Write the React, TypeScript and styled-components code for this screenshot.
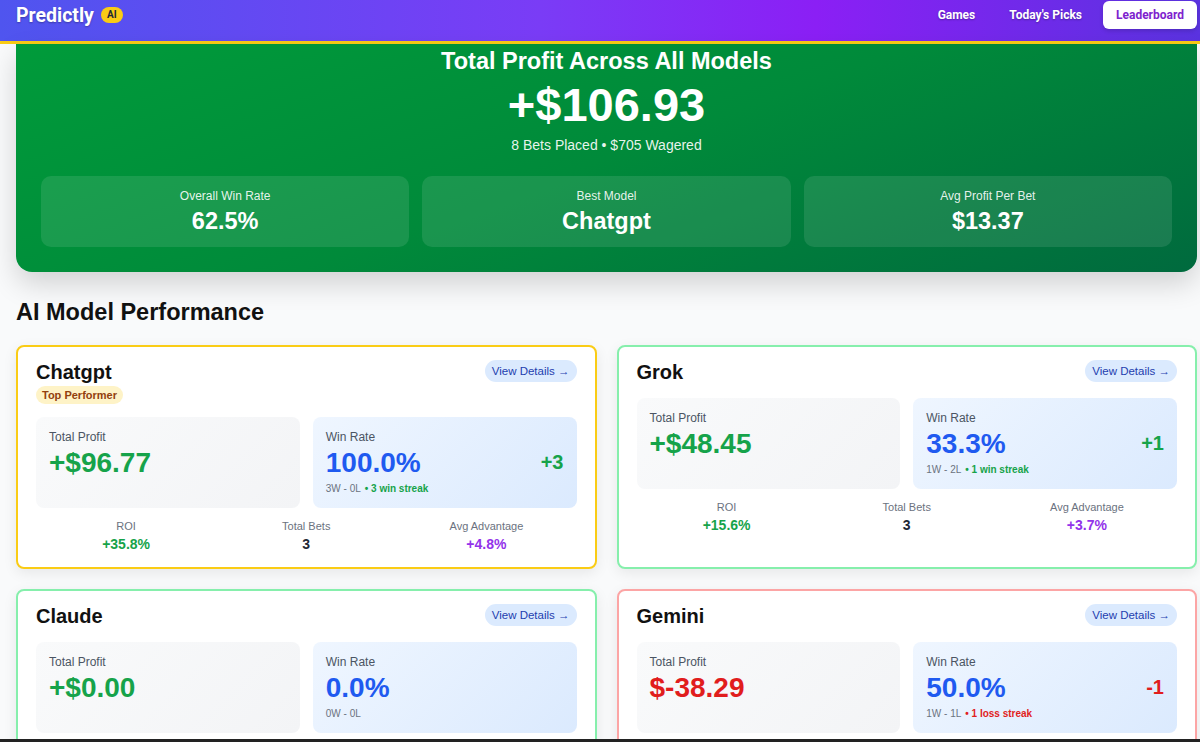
import React from 'react'
import styled, { createGlobalStyle } from 'styled-components'

const GlobalStyle = createGlobalStyle`
  html, body {
    margin: 0;
    padding: 0;
    overflow: hidden;
    background: #f9fafb;
    font-family: 'Liberation Sans', Arial, sans-serif;
    color: #111827;
  }
  * { box-sizing: border-box; }
`

const Page = styled.div`
  min-height: 742px;
`

const Header = styled.header`
  height: 44px;
  display: flex;
  justify-content: space-between;
  align-items: flex-start;
  padding: 1px 3px 0 16px;
  background: linear-gradient(90deg, #4f55ef 0%, #7a3cf6 45%, #8b1ff5 68%, #5a33e0 100%);
  border-bottom: 3px solid #facc15;
  font-family: Roboto, 'Liberation Sans', sans-serif;
`

const Brand = styled.div`
  display: flex;
  align-items: center;
  gap: 7px;
  height: 28px;
`

const Logo = styled.span`
  color: #fff;
  font-size: 19.5px;
  font-weight: 700;
  text-shadow: 0 1px 2px rgba(0, 0, 0, 0.3);
`

const AiBadge = styled.span`
  background: #facc15;
  color: #1f2937;
  font-size: 10px;
  font-weight: 700;
  padding: 2px 6px;
  border-radius: 8px;
  line-height: 12px;
`

const Nav = styled.nav`
  display: flex;
  gap: 8px;
`

const NavItem = styled.a<{ $active?: boolean }>`
  display: flex;
  align-items: center;
  height: 28px;
  padding: 0 13px;
  border-radius: 6px;
  font-size: 12px;
  font-weight: 700;
  color: ${({ $active }) => ($active ? '#7e22ce' : '#fff')};
  background: ${({ $active }) => ($active ? '#fff' : 'transparent')};
  box-shadow: ${({ $active }) => ($active ? '0 2px 4px rgba(0,0,0,0.15)' : 'none')};
  text-shadow: ${({ $active }) => ($active ? 'none' : '0 1px 2px rgba(0,0,0,0.3)')};
  text-decoration: none;
  cursor: pointer;
`

const Main = styled.main`
  padding: 0 3px 0 16px;
`

const Hero = styled.section`
  background: linear-gradient(160deg, #009b3a 0%, #008a3a 50%, #006a3e 100%);
  border-radius: 0 0 16px 16px;
  padding: 3px 25px 25px;
  color: #fff;
  text-align: center;
  box-shadow: 0 12px 28px rgba(0, 0, 0, 0.16);
`

const HeroTitle = styled.h1`
  margin: 0;
  font-size: 23.5px;
  line-height: 28px;
  font-weight: 700;
`

const HeroValue = styled.div`
  margin-top: 3px;
  font-size: 47px;
  line-height: 54px;
  font-weight: 700;
`

const HeroSub = styled.div`
  margin-top: 3px;
  font-size: 14px;
  line-height: 20px;
  color: rgba(255, 255, 255, 0.92);
`

const HeroStats = styled.div`
  margin-top: 21px;
  display: grid;
  grid-template-columns: repeat(3, 1fr);
  gap: 13px;
`

const HeroStat = styled.div`
  background: rgba(255, 255, 255, 0.1);
  border-radius: 10px;
  padding: 12px;
`

const HeroStatLabel = styled.div`
  font-size: 12px;
  line-height: 16px;
  color: rgba(255, 255, 255, 0.9);
`

const HeroStatValue = styled.div`
  margin-top: 3px;
  font-size: 23.5px;
  line-height: 28px;
  font-weight: 700;
`

const SectionTitle = styled.h2`
  margin: 26px 0 19px;
  font-size: 23.5px;
  line-height: 28px;
  font-weight: 700;
  color: #111;
`

const Grid = styled.div`
  display: grid;
  grid-template-columns: 1fr 1fr;
  gap: 20px;
`

const Card = styled.div<{ $border: string }>`
  background: #fff;
  border: 2px solid ${({ $border }) => $border};
  border-radius: 8px;
  padding: 13px 18px 14px;
  box-shadow: 0 4px 14px rgba(0, 0, 0, 0.08);
`

const CardHead = styled.div`
  display: flex;
  justify-content: space-between;
  align-items: flex-start;
  margin-bottom: 13px;
`

const CardTitle = styled.h3`
  margin: 0;
  font-size: 20px;
  line-height: 25px;
  font-weight: 700;
  color: #111;
`

const TopBadge = styled.span`
  display: inline-block;
  background: #fef3c7;
  color: #92400e;
  font-size: 11px;
  font-weight: 700;
  line-height: 18px;
  padding: 0 6px;
  border-radius: 9px;
`

const DetailsButton = styled.button`
  height: 22px;
  padding: 0 7px;
  border: none;
  border-radius: 11px;
  background: #dbeafe;
  color: #1e40af;
  font-family: 'Liberation Sans', Arial, sans-serif;
  font-size: 11.5px;
  cursor: pointer;
`

const Boxes = styled.div`
  display: grid;
  grid-template-columns: 1fr 1fr;
  gap: 13px;
`

const Box = styled.div<{ $tone: 'gray' | 'blue' }>`
  border-radius: 8px;
  padding: 12px 13px;
  background: ${({ $tone }) =>
    $tone === 'blue'
      ? 'linear-gradient(135deg, #eff6ff 0%, #dbeafe 100%)'
      : 'linear-gradient(135deg, #f9fafb 0%, #f3f4f6 100%)'};
  display: flex;
  align-items: flex-start;
  justify-content: space-between;
`

const BoxLabel = styled.div`
  font-size: 12px;
  line-height: 16px;
  color: #4b5563;
`

const BoxValue = styled.div<{ $color: string }>`
  margin-top: 1px;
  font-size: 28px;
  line-height: 34px;
  font-weight: 700;
  color: ${({ $color }) => $color};
`

const BoxSub = styled.div`
  margin-top: 2px;
  font-size: 10px;
  line-height: 14px;
  color: #6b7280;
`

const Streak = styled.span<{ $color: string }>`
  margin-left: 4px;
  font-weight: 700;
  color: ${({ $color }) => $color};
`

const StreakDelta = styled.div<{ $color: string }>`
  align-self: center;
  font-size: 20px;
  font-weight: 700;
  color: ${({ $color }) => $color};
`

const Stats = styled.div`
  margin-top: 11px;
  display: grid;
  grid-template-columns: repeat(3, 1fr);
  text-align: center;
`

const StatLabel = styled.div`
  font-size: 11px;
  line-height: 14px;
  color: #6b7280;
`

const StatValue = styled.div<{ $color: string }>`
  margin-top: 2px;
  font-size: 14px;
  line-height: 18px;
  font-weight: 700;
  color: ${({ $color }) => $color};
`

const BottomEdge = styled.div`
  position: fixed;
  left: 0;
  right: 0;
  bottom: 0;
  height: 3px;
  background: #222;
`

const GREEN = '#16a34a'
const RED = '#e11d1d'
const BLUE = '#1f5af0'
const PURPLE = '#9333ea'

type Model = {
  name: string
  border: string
  top?: boolean
  profit: string
  winRate: string
  record: string
  streak?: string
  delta?: string
  roi?: string
  bets?: string
  adv?: string
}

const models: Model[] = [
  { name: 'Chatgpt', border: '#facc15', top: true, profit: '+$96.77', winRate: '100.0%', record: '3W - 0L', streak: '3 win streak', delta: '+3', roi: '+35.8%', bets: '3', adv: '+4.8%' },
  { name: 'Grok', border: '#86efac', profit: '+$48.45', winRate: '33.3%', record: '1W - 2L', streak: '1 win streak', delta: '+1', roi: '+15.6%', bets: '3', adv: '+3.7%' },
  { name: 'Claude', border: '#86efac', profit: '+$0.00', winRate: '0.0%', record: '0W - 0L' },
  { name: 'Gemini', border: '#fca5a5', profit: '$-38.29', winRate: '50.0%', record: '1W - 1L', streak: '1 loss streak', delta: '-1' },
]

const ModelCard = ({ m }: { m: Model }) => {
  const negative = m.profit.includes('-')
  const streakColor = m.delta && m.delta.startsWith('-') ? RED : GREEN
  return (
    <Card $border={m.border}>
      <CardHead>
        <div>
          <CardTitle>{m.name}</CardTitle>
          {m.top && <TopBadge>Top Performer</TopBadge>}
        </div>
        <DetailsButton>View Details →</DetailsButton>
      </CardHead>
      <Boxes>
        <Box $tone="gray">
          <div>
            <BoxLabel>Total Profit</BoxLabel>
            <BoxValue $color={negative ? RED : GREEN}>{m.profit}</BoxValue>
          </div>
        </Box>
        <Box $tone="blue">
          <div>
            <BoxLabel>Win Rate</BoxLabel>
            <BoxValue $color={BLUE}>{m.winRate}</BoxValue>
            <BoxSub>
              {m.record}
              {m.streak && <Streak $color={streakColor}>• {m.streak}</Streak>}
            </BoxSub>
          </div>
          {m.delta && <StreakDelta $color={streakColor}>{m.delta}</StreakDelta>}
        </Box>
      </Boxes>
      {m.roi && (
        <Stats>
          <div>
            <StatLabel>ROI</StatLabel>
            <StatValue $color={GREEN}>{m.roi}</StatValue>
          </div>
          <div>
            <StatLabel>Total Bets</StatLabel>
            <StatValue $color="#1f2937">{m.bets}</StatValue>
          </div>
          <div>
            <StatLabel>Avg Advantage</StatLabel>
            <StatValue $color={PURPLE}>{m.adv}</StatValue>
          </div>
        </Stats>
      )}
    </Card>
  )
}

export default function App() {
  return (
    <Page>
      <GlobalStyle />
      <Header>
        <Brand>
          <Logo>Predictly</Logo>
          <AiBadge>AI</AiBadge>
        </Brand>
        <Nav>
          <NavItem>Games</NavItem>
          <NavItem>Today's Picks</NavItem>
          <NavItem $active>Leaderboard</NavItem>
        </Nav>
      </Header>
      <Main>
        <Hero>
          <HeroTitle>Total Profit Across All Models</HeroTitle>
          <HeroValue>+$106.93</HeroValue>
          <HeroSub>8 Bets Placed • $705 Wagered</HeroSub>
          <HeroStats>
            <HeroStat>
              <HeroStatLabel>Overall Win Rate</HeroStatLabel>
              <HeroStatValue>62.5%</HeroStatValue>
            </HeroStat>
            <HeroStat>
              <HeroStatLabel>Best Model</HeroStatLabel>
              <HeroStatValue>Chatgpt</HeroStatValue>
            </HeroStat>
            <HeroStat>
              <HeroStatLabel>Avg Profit Per Bet</HeroStatLabel>
              <HeroStatValue>$13.37</HeroStatValue>
            </HeroStat>
          </HeroStats>
        </Hero>
        <SectionTitle>AI Model Performance</SectionTitle>
        <Grid>
          {models.map((m) => (
            <ModelCard key={m.name} m={m} />
          ))}
        </Grid>
      </Main>
      <BottomEdge />
    </Page>
  )
}
